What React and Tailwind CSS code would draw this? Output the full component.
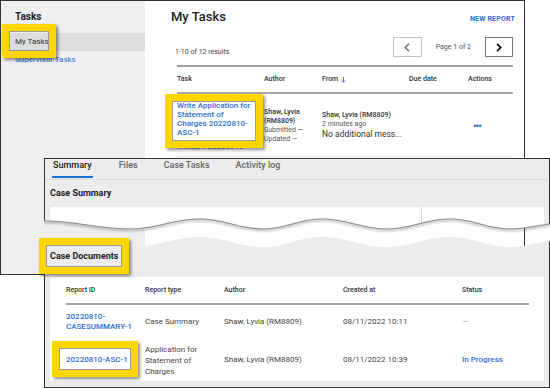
import React from 'react';

const blue = 'text-[#2c6ed5]';

const ChevronLeft = () => (
    <svg width="6" height="9" viewBox="0 0 6 9">
        <polyline points="5,0.8 1.2,4.5 5,8.2" fill="none" stroke="#666" strokeWidth="1.3" />
    </svg>
);

const ChevronRight = () => (
    <svg width="6" height="9" viewBox="0 0 6 9">
        <polyline points="1,0.8 4.8,4.5 1,8.2" fill="none" stroke="#111" strokeWidth="1.8" />
    </svg>
);

const ArrowDown = () => (
    <svg width="5" height="6" viewBox="0 0 5 6">
        <path d="M2.5 0 V5.2 M0.6 3.4 L2.5 5.3 L4.4 3.4" fill="none" stroke="#2c6ed5" strokeWidth="0.9" />
    </svg>
);

// yellow callout frame drawn over the screenshot
const Callout = ({ className }) => (
    <div className={`absolute border-[7px] border-[#ffd600] shadow-[2px_2px_3px_rgba(0,0,0,0.45)] ${className}`}>
        <div className="h-full w-full border border-[#9a9a9a]" />
    </div>
);

const BackgroundWindow = () => (
    <div className="absolute left-0 top-0 flex h-[275px] w-[525px] border border-[#333]">
        <aside className="w-[144px] bg-[#efefef] pt-[10px]">
            <div className="px-[14px] text-[10px] font-bold leading-[12px] text-[#222]">Tasks</div>
            <div className="mt-[10px] flex h-[18px] items-center bg-[#dcdcdc] px-[14px] text-[8px] text-[#333]">My Tasks</div>
            <div className={`flex h-[18px] items-center px-[14px] text-[8px] ${blue}`}>Supervisor Tasks</div>
        </aside>

        <main className="flex-1 bg-white pl-[26px] pr-[11px] pt-[8px]">
            <div className="flex items-start justify-between">
                <h1 className="text-[13px] font-medium leading-[16px] text-[#222]">My Tasks</h1>
                <button className={`-mr-[2px] mt-[6px] text-[7px] font-bold leading-[8px] tracking-[0.2px] ${blue}`}>NEW REPORT</button>
            </div>

            <div className="mt-[12px] flex items-end justify-between pl-[4px]">
                <span className="pb-[1px] text-[7px] leading-[8px] text-[#444]">1-10 of 12 results</span>
                <div className="flex items-center gap-[14px]">
                    <button className="flex h-[20px] w-[29px] items-center justify-center border border-[#c4c4c4] bg-white">
                        <ChevronLeft />
                    </button>
                    <span className="text-[7px] text-[#555]">Page 1 of 2</span>
                    <button className="flex h-[20px] w-[28px] items-center justify-center border border-[#777] bg-white">
                        <ChevronRight />
                    </button>
                </div>
            </div>

            <div className="ml-[6px] mt-[8px] h-[2px] bg-[#9e9e9e]" />
            <div className="ml-[6px] flex h-[25px] items-center text-[7px] font-medium text-[#333]">
                <div className="w-[87px]">Task</div>
                <div className="w-[58px]">Author</div>
                <div className="flex w-[87px] items-center gap-[3px]">From <ArrowDown /></div>
                <div className="w-[59px]">Due date</div>
                <div>Actions</div>
            </div>
            <div className="ml-[6px] h-[2px] bg-[#a8a8a8]" />

            <div className="ml-[6px] flex h-[63px] border-b border-[#dedede]">
                <div className={`w-[87px] pt-[7px] text-[8px] font-medium leading-[9px] ${blue}`}>
                    <div>Write Application for</div>
                    <div>Statement of</div>
                    <div>Charges 20220810-</div>
                    <div>ASC-1</div>
                    <div className="mt-[5px] font-normal">Incident 20220810</div>
                </div>
                <div className="w-[58px] pt-[14px] text-[7px] leading-[9px]">
                    <div className="font-medium text-[#333]">Shaw, Lyvia</div>
                    <div className="font-medium text-[#333]">(RM8809)</div>
                    <div className="text-[#555]">Submitted —</div>
                    <div className="text-[#555]">Updated —</div>
                </div>
                <div className="w-[146px] pt-[17px] text-[7px] leading-[9px]">
                    <div className="font-medium text-[#333]">Shaw, Lyvia (RM8809)</div>
                    <div className="text-[#555]">2 minutes ago</div>
                    <div className="text-[8.5px] leading-[11px] text-[#333]">No additional mess...</div>
                </div>
                <div className={`pl-[5px] pt-[27px] text-[10px] font-bold leading-[12px] tracking-[-1px] ${blue}`}>•••</div>
            </div>
        </main>
    </div>
);

const UpperPiece = () => (
    <div className="absolute left-[44px] top-[158px] h-[76px] w-[506px] border-x border-t border-[#333] bg-[#ececec] [clip-path:path('M0,0_H506_V66_C495,67_482,71_466,71_C442,71_430,61_406,61_C381,61_368,71_343,71_C317,71_304,61_278,61_C254,61_243,71_219,71_C194,71_181,61_156,61_C128,61_114,71_86,71_C52,71_34,63_0,63_Z')]">
        <div className="flex h-[21px] gap-[26px] border-b border-[#dcdcdc] pl-[7px] text-[9px] font-medium leading-[12px]">
            <div className="h-[19px] border-b-2 border-[#1a6fd8] px-[1px] text-[#222]">Summary</div>
            <div className="text-[#666]">Files</div>
            <div className="text-[#666]">Case Tasks</div>
            <div className="text-[#666]">Activity log</div>
        </div>
        <div className="mt-[7px] pl-[5px] text-[9px] font-bold leading-[12px] text-[#222]">Case Summary</div>
        <div className="ml-[5px] mr-[5px] mt-[8px] flex h-[40px] bg-white">
            <div className="w-[371px]" />
            <div className="flex-1 border-l border-[#d6d6d6]" />
        </div>
    </div>
);

const WaveShadow = () => (
    <svg className="absolute left-[44px] top-[158px]" width="506" height="80" viewBox="0 0 506 80">
        <defs>
            <filter id="tear" x="-5%" y="-50%" width="110%" height="200%">
                <feGaussianBlur stdDeviation="1" />
            </filter>
        </defs>
        <path
            d="M0,63 C34,63 52,71 86,71 C114,71 128,61 156,61 C181,61 194,71 219,71 C243,71 254,61 278,61 C304,61 317,71 343,71 C368,71 381,61 406,61 C430,61 442,71 466,71 C482,71 495,67 506,66"
            fill="none"
            stroke="#000"
            strokeOpacity="0.25"
            strokeWidth="2"
            transform="translate(0,1.5)"
            filter="url(#tear)"
        />
        <path
            d="M0,63 C34,63 52,71 86,71 C114,71 128,61 156,61 C181,61 194,71 219,71 C243,71 254,61 278,61 C304,61 317,71 343,71 C368,71 381,61 406,61 C430,61 442,71 466,71 C482,71 495,67 506,66"
            fill="none"
            stroke="#8c8c8c"
            strokeWidth="1.2"
        />
    </svg>
);

const LowerPiece = () => (
    <div className="absolute left-[44px] top-[236px] flex h-[152px] w-[506px] flex-col border-b border-r border-[#333] bg-[#ececec] [clip-path:path('M0,3_C34,3_52,11_86,11_C114,11_128,1_156,1_C181,1_194,11_219,11_C243,11_254,1_278,1_C304,1_317,11_343,11_C368,11_381,1_406,1_C430,1_442,11_466,11_C482,11_495,6_506,5_V152_H0_Z')]">
        <div className="pl-[6px] pt-[14px] text-[9px] font-bold leading-[12px] text-[#222]">Case Documents</div>
        <div className="mt-[12px] flex-1 border-l border-[#333] pb-[6px] pl-[5px] pr-[5px] pt-[3px]">
            <div className="h-[104px] bg-white pl-[16px] pr-[15px] text-[8px] text-[#444]">
                <div className="flex h-[26px] items-center text-[7px] font-medium text-[#333]">
                    <div className="w-[79px]">Report ID</div>
                    <div className="w-[79px]">Report type</div>
                    <div className="w-[119px]">Author</div>
                    <div className="w-[119px]">Created at</div>
                    <div>Status</div>
                </div>
                <div className="h-[2px] bg-[#a8a8a8]" />
                <div className="flex h-[34px] items-center">
                    <div className={`w-[79px] font-medium leading-[10px] ${blue}`}>
                        <div>20220810-</div>
                        <div>CASESUMMARY-1</div>
                    </div>
                    <div className="w-[79px]">Case Summary</div>
                    <div className="w-[119px]">Shaw, Lyvia (RM8809)</div>
                    <div className="w-[119px]">08/11/2022 10:11</div>
                    <div className="text-[#999]">—</div>
                </div>
                <div className="flex h-[42px] items-center">
                    <div className={`w-[79px] font-medium ${blue}`}>20220810-ASC-1</div>
                    <div className="w-[79px] leading-[11px]">
                        <div>Application for</div>
                        <div>Statement of</div>
                        <div>Charges</div>
                    </div>
                    <div className="w-[119px]">Shaw, Lyvia (RM8809)</div>
                    <div className="w-[119px]">08/11/2022 10:39</div>
                    <div className={`font-medium ${blue}`}>In Progress</div>
                </div>
            </div>
        </div>
    </div>
);

export default function App() {
    return (
        <div className="relative h-[388px] w-[550px] overflow-hidden bg-white font-[Roboto,sans-serif]">
            <BackgroundWindow />
            <LowerPiece />
            <UpperPiece />
            <WaveShadow />

            <Callout className="left-[2px] top-[24px] h-[34px] w-[54px]" />
            <Callout className="left-[165px] top-[94px] h-[54px] w-[98px]" />
            <Callout className="left-[39px] top-[238px] h-[36px] w-[90px]" />
            <Callout className="left-[52px] top-[341px] h-[36px] w-[86px]" />
        </div>
    );
}
